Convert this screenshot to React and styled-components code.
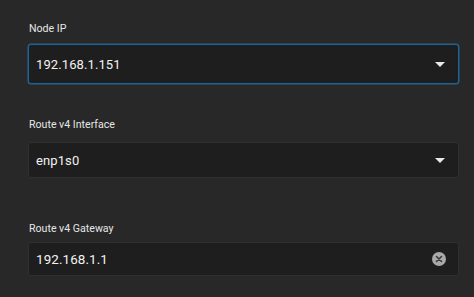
import React from "react";
import styled, { createGlobalStyle } from "styled-components";

const Global = createGlobalStyle`
  html, body { margin: 0; padding: 0; background: #282828; }
  body { font-family: Roboto, "Liberation Sans", sans-serif; }
`;

const Page = styled.div`
  width: 474px;
  height: 297px;
  box-sizing: border-box;
  padding: 22px 15px 0 28px;
  background: #282828;
  display: flex;
  flex-direction: column;
  overflow: hidden;
`;

const Field = styled.div`
  display: flex;
  flex-direction: column;
  margin-top: ${(p) => p.$top || 0}px;
`;

const Label = styled.div`
  font-size: 10.6px;
  line-height: 14px;
  color: #e6e6e6;
  margin-bottom: ${(p) => p.$gap || 8}px;
  padding-left: 1px;
`;

const Box = styled.div`
  height: ${(p) => p.$h}px;
  box-sizing: border-box;
  background: #1e1e1e;
  border: 1px solid ${(p) => (p.$focused ? "#1c6596" : "#2f2f2f")};
  box-shadow: ${(p) => (p.$focused ? "0 0 0 0.5px #1c6596" : "none")};
  border-radius: 3px;
  display: flex;
  align-items: center;
  padding: 0 12px 0 7px;
`;

const Value = styled.div`
  flex: 1;
  font-size: ${(p) => p.$size || 13}px;
  color: #f2f2f2;
  letter-spacing: 0.1px;
`;

const Caret = styled.div`
  width: 0;
  height: 0;
  border-left: 5px solid transparent;
  border-right: 5px solid transparent;
  border-top: 5px solid #e8e8e8;
  margin-right: 1px;
`;

const ClearButton = styled.div`
  width: 14px;
  height: 14px;
  border-radius: 50%;
  background: #a9a9a9;
  display: flex;
  align-items: center;
  justify-content: center;
`;

function ClearIcon() {
  return (
    <ClearButton>
      <svg width="8" height="8" viewBox="0 0 8 8">
        <path d="M1.5 1.5 L6.5 6.5 M6.5 1.5 L1.5 6.5" stroke="#3a3a3a" strokeWidth="1.6" strokeLinecap="round" />
      </svg>
    </ClearButton>
  );
}

export default function App() {
  return (
    <>
      <Global />
      <Page>
        <Field>
          <Label $gap={8}>Node IP</Label>
          <Box $h={40} $focused>
            <Value>192.168.1.151</Value>
            <Caret />
          </Box>
        </Field>
        <Field $top={34}>
          <Label $gap={10}>Route v4 Interface</Label>
          <Box $h={36}>
            <Value>enp1s0</Value>
            <Caret />
          </Box>
        </Field>
        <Field $top={44}>
          <Label $gap={6}>Route v4 Gateway</Label>
          <Box $h={34}>
            <Value $size={13.4}>192.168.1.1</Value>
            <ClearIcon />
          </Box>
        </Field>
      </Page>
    </>
  );
}
